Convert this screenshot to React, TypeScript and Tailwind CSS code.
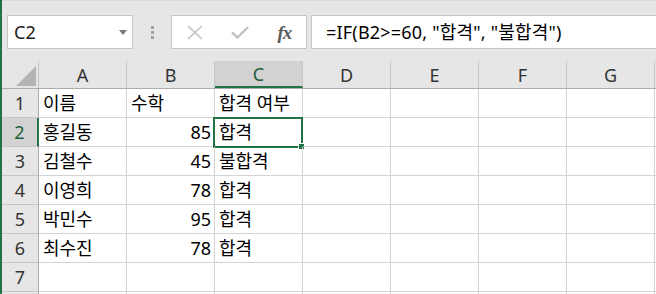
import React from "react";

const font = "font-['Noto_Sans','Noto_Sans_CJK_KR',sans-serif]";

const cols = ["A", "B", "C", "D", "E", "F", "G"];

const data: [string, string, string][] = [
  ["이름", "수학", "합격 여부"],
  ["홍길동", "85", "합격"],
  ["김철수", "45", "불합격"],
  ["이영희", "78", "합격"],
  ["박민수", "95", "합격"],
  ["최수진", "78", "합격"],
  ["", "", ""],
  ["", "", ""],
];

const isNum = (s: string) => /^\d+$/.test(s);

const App = () => {
  return (
    <div
      className={`w-[656px] h-[294px] overflow-hidden bg-[#e6e6e6] border-l-2 border-[#217346] flex flex-col ${font} text-[18px] text-black`}
    >
      {/* Formula bar */}
      <div className="h-[61px] shrink-0 flex items-start pt-[14px] border-t border-[#d9d9d9]">
        <div className="ml-[5px] w-[126px] h-[34px] bg-white border border-[#c6c6c6] flex items-center justify-between pl-[6px] pr-[5px]">
          <span className="leading-none text-[#222]">C2</span>
          <svg width="8" height="5" viewBox="0 0 8 5">
            <path d="M0 0H8L4 5Z" fill="#7a7a7a" />
          </svg>
        </div>
        <div className="w-[38px] h-[34px] flex flex-col items-center justify-center gap-[2px]">
          <span className="w-[3px] h-[3px] bg-[#a0a0a0]" />
          <span className="w-[3px] h-[3px] bg-[#a0a0a0]" />
          <span className="w-[3px] h-[3px] bg-[#a0a0a0]" />
        </div>
        <div className="w-[136px] h-[34px] bg-white border border-[#c6c6c6] flex items-center">
          <div className="w-[46px] flex justify-center">
            <svg width="16" height="15" viewBox="0 0 16 15">
              <path d="M1 1L15 14M15 1L1 14" stroke="#c2c2c2" strokeWidth="1.6" fill="none" />
            </svg>
          </div>
          <div className="w-[46px] flex justify-center">
            <svg width="18" height="13" viewBox="0 0 18 13">
              <path d="M1 6.5L6.5 11.5L17 1" stroke="#c2c2c2" strokeWidth="2.4" fill="none" />
            </svg>
          </div>
          <div className="w-[44px] flex justify-center">
            <span className="font-['Liberation_Serif',serif] italic font-bold text-[19px] leading-none text-[#5a5a5a] tracking-[-1px]">
              fx
            </span>
          </div>
        </div>
        <div className="ml-[4px] flex-1 h-[34px] bg-white border border-r-0 border-[#c6c6c6] flex items-center pl-[14px]">
          <span className="leading-none whitespace-pre tracking-[0.2px]">=IF(B2&gt;=60, "합격", "불합격")</span>
        </div>
      </div>

      {/* Column headers */}
      <div className="h-[28px] shrink-0 flex border-b border-[#ababab]">
        <div className="w-[37px] shrink-0 border-r border-[#c6c6c6] flex items-end justify-end pr-[2px] pb-[2px]">
          <svg width="20" height="20" viewBox="0 0 20 20">
            <path d="M20 0V20H0Z" fill="#b4b4b4" />
          </svg>
        </div>
        {cols.map((c) => (
          <div
            key={c}
            className={`w-[88px] shrink-0 border-r border-[#c6c6c6] flex items-center justify-center leading-none ${
              c === "C" ? "bg-[#d2d2d2] text-[#1d5e39] border-b-2 border-b-[#217346]" : "text-[#333]"
            }`}
          >
            {c}
          </div>
        ))}
        <div className="flex-1" />
      </div>

      {/* Rows */}
      <div className="flex-1 bg-white">
        {data.map((row, i) => {
          const n = i + 1;
          const sel = n === 2;
          return (
            <div key={n} className="h-[29px] flex">
              <div
                className={`w-[37px] shrink-0 border-b border-[#c6c6c6] flex items-center justify-center leading-none ${
                  sel
                    ? "bg-[#d2d2d2] text-[#1d5e39] border-r-2 border-r-[#217346]"
                    : "bg-[#e6e6e6] text-[#333] border-r border-r-[#ababab]"
                }`}
              >
                {n < 8 ? n : ""}
              </div>
              {cols.map((c, j) => {
                const v = j < 3 ? row[j] : "";
                return (
                  <div
                    key={c}
                    className={`relative w-[88px] shrink-0 border-r border-b border-[#d4d4d4] flex items-center leading-none whitespace-nowrap ${
                      isNum(v) ? "justify-end pr-[3px]" : "pl-[4px]"
                    }`}
                  >
                    {v}
                    {sel && c === "C" && (
                      <div className="absolute left-[-2px] top-[-1px] right-[-1px] bottom-[-2px] border-2 border-[#217346]">
                        <div className="absolute right-[-4px] bottom-[-4px] w-[7px] h-[7px] bg-[#217346] border border-white" />
                      </div>
                    )}
                  </div>
                );
              })}
              <div className="flex-1 border-b border-[#d4d4d4]" />
            </div>
          );
        })}
      </div>
    </div>
  );
};

export default App;
